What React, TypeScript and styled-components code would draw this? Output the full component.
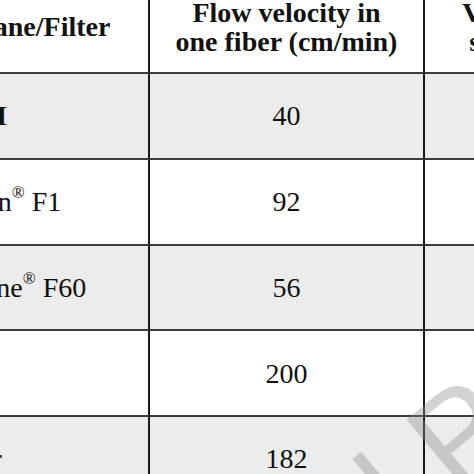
import React from 'react';
import styled, { createGlobalStyle } from 'styled-components';

type Row = { name: string; sup?: string; rest?: string; strong?: boolean; velocity: string; volume: string };

const rows: Row[] = [
  { name: 'Plasma-II', strong: true, velocity: '40', volume: '10' },
  { name: 'Hemophan', sup: '®', rest: ' F1', velocity: '92', volume: '10' },
  { name: 'Polysulfone', sup: '®', rest: ' F60', velocity: '56', volume: '10' },
  { name: 'Nylon', velocity: '200', volume: '20' },
  { name: 'Disc filter', velocity: '182', volume: '20' },
];

const App: React.FC = () => {
  return (
    <>
      <GlobalStyle />
      <Viewport>
        <Table>
          <HeadCell>
            <span>Membrane/Filter</span>
          </HeadCell>
          <HeadCell>
            <span>
              Flow velocity in
              <br />
              one fiber (cm/min)
            </span>
          </HeadCell>
          <HeadCell last>
            <span>
              Volume of the
              <br />
              sample (mL)
            </span>
          </HeadCell>

          {rows.map((row, i) => (
            <React.Fragment key={row.name}>
              <NameCell shaded={i % 2 === 0} strong={row.strong}>
                <span>
                  {row.name}
                  {row.sup && <Sup>{row.sup}</Sup>}
                  {row.rest}
                </span>
              </NameCell>
              <ValueCell shaded={i % 2 === 0}>{row.velocity}</ValueCell>
              <ValueCell shaded={i % 2 === 0} last>
                {row.volume}
              </ValueCell>
            </React.Fragment>
          ))}
        </Table>
        <Watermark>Journal Pre-proof</Watermark>
      </Viewport>
    </>
  );
};

const GlobalStyle = createGlobalStyle`
  html, body {
    margin: 0;
    padding: 0;
    background: #ffffff;
  }
`;

const Viewport = styled.div`
  position: relative;
  width: 474px;
  height: 474px;
  overflow: hidden;
  background: #ffffff;
`;

// the table is cropped on the left and at the top
const Table = styled.div`
  display: grid;
  grid-template-columns: 284px 275px 240px;
  grid-template-rows: 93px repeat(5, 85.75px);
  margin-left: -134px;
  margin-top: -19px;
  font-family: 'Liberation Serif', 'Times New Roman', serif;
  font-size: 28px;
  color: #111111;
`;

const Cell = styled.div<{ shaded?: boolean; last?: boolean }>`
  display: flex;
  align-items: center;
  box-sizing: border-box;
  background: ${(props) => (props.shaded ? '#ececec' : '#ffffff')};
  border-bottom: 2px solid #3a3a3a;
  border-right: ${(props) => (props.last ? 'none' : '2px solid #1a1a1a')};
  white-space: pre;
`;

const HeadCell = styled(Cell)`
  justify-content: center;
  text-align: center;
  font-weight: 700;
  line-height: 29px;
  white-space: nowrap;
`;

const NameCell = styled(Cell)<{ strong?: boolean }>`
  padding-left: 23px;
  font-weight: ${(props) => (props.strong ? 700 : 400)};
  line-height: 31px;
`;

const ValueCell = styled(Cell)`
  justify-content: center;
  line-height: 31px;
`;

const Sup = styled.span`
  font-size: 17px;
  line-height: 0;
  vertical-align: 13px;
`;

const Watermark = styled.div`
  position: absolute;
  left: 30.5px;
  top: 707.5px;
  transform-origin: 0 0;
  transform: rotate(-40deg);
  font-family: 'Liberation Sans', Arial, sans-serif;
  font-size: 130px;
  line-height: 1;
  white-space: nowrap;
  color: rgba(140, 140, 140, 0.38);
  pointer-events: none;
`;

export default App;
